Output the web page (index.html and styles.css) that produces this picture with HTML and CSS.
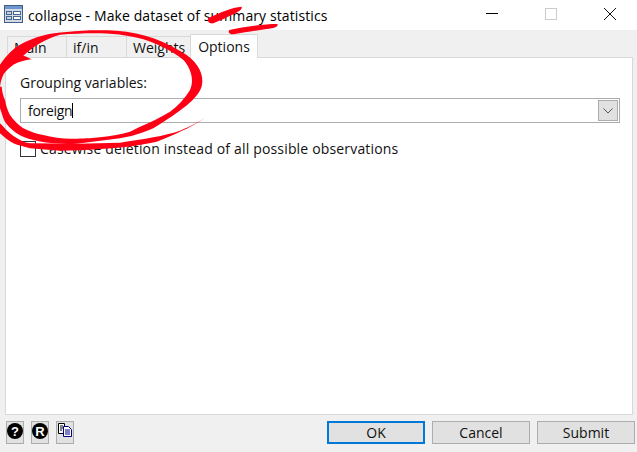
FILE: index.html
```html
<!DOCTYPE html>
<html lang="en">
<head>
    <meta charset="UTF-8">
    <title>collapse - Make dataset of summary statistics</title>
    <link rel="stylesheet" href="styles.css">
</head>
<body>
    <section class="dialog">
        <header class="titlebar">
            <svg class="app-icon" width="19" height="18" viewBox="0 0 19 18">
                <rect x="0.5" y="0.5" width="18" height="17" fill="#d3dae3" stroke="#3f5f8a"/>
                <rect x="1" y="1" width="17" height="3" fill="#6f97cf"/>
                <rect x="2.5" y="6.5" width="5" height="3" fill="#c9d2dd" stroke="#45658f"/>
                <rect x="2.5" y="11.5" width="5" height="3" fill="#c9d2dd" stroke="#45658f"/>
                <rect x="9.5" y="6.5" width="7" height="3" fill="#fff" stroke="#45658f"/>
                <rect x="9.5" y="11.5" width="7" height="3" fill="#fff" stroke="#45658f"/>
            </svg>
            <h1 class="title">collapse - Make dataset of summary statistics</h1>
            <div class="win-controls">
                <svg width="14" height="14" viewBox="0 0 14 14"><path d="M1 6.5H13" stroke="#000"/></svg>
                <svg width="14" height="14" viewBox="0 0 14 14"><rect x="1.5" y="1.5" width="11" height="11" fill="none" stroke="#ccc"/></svg>
                <svg width="14" height="14" viewBox="0 0 14 14"><path d="M1 1L13 13M13 1L1 13" stroke="#111"/></svg>
            </div>
        </header>

        <main class="content">
            <nav class="tabs">
                <span class="tab tab-main">Main</span>
                <span class="tab tab-if">if/in</span>
                <span class="tab tab-weights">Weights</span>
                <span class="tab tab-options active">Options</span>
            </nav>
            <section class="panel">
                <label class="field-label">Grouping variables:</label>
                <div class="combo">
                    <span class="combo-value">foreign</span><span class="caret"></span>
                    <span class="combo-button">
                        <svg width="10" height="6" viewBox="0 0 10 6"><path d="M0.5 0.5L5 5L9.5 0.5" fill="none" stroke="#555"/></svg>
                    </span>
                </div>
                <div class="check-row">
                    <span class="checkbox"></span>
                    <span class="check-label">Casewise deletion instead of all possible observations</span>
                </div>
            </section>
            <footer class="actions">
                <div class="small-buttons">
                    <span class="small-btn"><span class="round-glyph">?</span></span>
                    <span class="small-btn"><span class="round-glyph">R</span></span>
                    <span class="small-btn">
                        <svg width="16" height="14" viewBox="0 0 16 14">
                            <path d="M1.5 0.5H7.5V10.5H1.5Z" fill="#fff" stroke="#000"/>
                            <path d="M3 3H6M3 5H6M3 7H5" stroke="#000"/>
                            <path d="M6.5 3.5H11.5L14.5 6.5V13.5H6.5Z" fill="#fff" stroke="#000080"/>
                            <path d="M8 7H13M8 9H13M8 11H13" stroke="#000080"/>
                        </svg>
                    </span>
                </div>
                <div class="main-buttons">
                    <button class="btn btn-default">OK</button>
                    <button class="btn">Cancel</button>
                    <button class="btn">Submit</button>
                </div>
            </footer>
        </main>
    </section>

    <!-- red marker scribble drawn over the screenshot -->
    <svg class="scribble" width="637" height="452" viewBox="0 0 1911 1356">
        <path fill="#fe0016" d="M0 194 C20 165 40 145 60 134 C100 112 150 98 200 96 C250 90 300 90 350 92 C430 97 500 125 560 165 C595 190 612 225 606 255 C598 295 540 335 460 385 C420 403 390 410 360 415 L230 431 C180 434 130 428 100 420 C80 415 65 410 50 400 C30 385 15 370 10 355 L0 325 L0 260 L5 260 C6 275 10 290 15 300 C18 315 22 330 30 345 C40 360 55 375 70 385 C90 395 110 402 130 405 C160 413 195 418 230 416 C260 416 280 414 300 412 C335 408 365 402 390 395 C400 390 410 385 420 380 C450 368 480 352 510 335 C535 318 555 295 570 270 C585 240 570 200 550 180 C520 155 470 130 430 118 C350 95 270 98 180 104 C140 115 100 138 70 167 C80 170 88 174 95 178 C75 180 55 186 40 194 C25 205 15 215 10 224 C5 235 2 245 0 260 Z"/>
        <path fill="#fe0016" d="M622 348 C590 372 565 385 540 395 C520 405 495 415 470 425 C445 430 425 434 400 438 C370 442 335 445 300 447 C260 450 220 452 180 452 C150 450 120 448 90 445 C70 440 55 436 40 430 C25 422 10 410 0 400 L0 370 C10 380 20 392 30 400 C42 410 55 418 70 425 C80 428 90 430 100 430 L230 431 L360 428 C395 422 430 418 460 412 C490 406 515 400 540 392 C570 380 600 365 622 348 Z"/>
        <path fill="#fe0016" d="M625 54 C660 38 695 22 725 20 C728 28 715 36 695 45 C675 55 660 62 640 70 C628 72 620 64 625 54Z"/>
        <path fill="#fe0016" d="M688 90 C730 80 790 72 832 72 C836 80 825 84 800 87 C765 92 735 97 700 103 C688 103 683 97 688 90Z"/>
    </svg>
</body>
</html>
```

FILE: styles.css
```css
html, body {
    margin: 0;
    height: 100%;
}

body {
    width: 637px;
    height: 452px;
    overflow: hidden;
    position: relative;
    font-family: "Open Sans", sans-serif;
    color: #111;
    background: #f0f0f0;
}

.dialog {
    display: flex;
    flex-direction: column;
    height: 452px;
}

.titlebar {
    display: flex;
    align-items: center;
    height: 30px;
    padding: 0 0 0 4px;
    background: #fff;
}

.app-icon {
    margin: 0 5px 3px 0;
}

.title {
    flex: 1;
    margin: 0;
    font-size: 14px;
    font-weight: 400;
    letter-spacing: 0.1px;
    color: #000;
}

.win-controls {
    display: flex;
    gap: 45px;
    margin: 0 20px 2px 0;
}

.content {
    flex: 1;
    display: flex;
    flex-direction: column;
    padding: 5px 4px 8px 5px;
}

.tabs {
    display: flex;
    align-items: flex-end;
    height: 23px;
    padding-left: 2px;
    margin-bottom: -1px;
    position: relative;
}

.tab {
    display: flex;
    align-items: center;
    box-sizing: border-box;
    height: 22px;
    padding-left: 6px;
    border: 1px solid #d9d9d9;
    border-right: 0;
    font-size: 14px;
}

.tab-main { width: 59px; }
.tab-if { width: 60px; }
.tab-weights { width: 64px; }

.tab-options {
    justify-content: center;
    width: 68px;
    height: 24px;
    padding-left: 0;
    border-right: 1px solid #d9d9d9;
}

.tab.active {
    background: #fff;
    border-bottom: 0;
}

.panel {
    flex: 1;
    display: flex;
    flex-direction: column;
    background: #fff;
    border: 1px solid #d9d9d9;
    padding: 15px 12px 0 14px;
}

.field-label {
    font-size: 14px;
    line-height: 20px;
}

.combo {
    display: flex;
    align-items: center;
    height: 25px;
    box-sizing: border-box;
    margin-top: 5px;
    padding: 0 1px 0 7px;
    border: 1px solid #adadad;
    font-size: 14px;
    letter-spacing: -0.3px;
}

.caret {
    width: 1px;
    height: 15px;
    background: #000;
}

.combo-button {
    display: flex;
    align-items: center;
    justify-content: center;
    box-sizing: border-box;
    width: 20px;
    height: 21px;
    margin-left: auto;
    background: #e1e1e1;
    border: 1px solid #adadad;
}

.check-row {
    display: flex;
    align-items: center;
    margin-top: 17px;
    font-size: 14px;
    line-height: 18px;
}

.checkbox {
    box-sizing: border-box;
    width: 16px;
    height: 16px;
    margin-right: 4px;
    border: 1px solid #333;
}

.check-label {
    letter-spacing: 0.17px;
}

.actions {
    display: flex;
    justify-content: space-between;
    padding-top: 6px;
    margin-right: -2px;
}

.small-buttons,
.main-buttons {
    display: flex;
}

.small-buttons {
    gap: 7px;
    margin-left: 1px;
}

.small-btn {
    display: flex;
    justify-content: center;
    box-sizing: border-box;
    width: 18px;
    height: 23px;
    padding-top: 1px;
    background: #e1e1e1;
    border: 1px solid #adadad;
}

.round-glyph {
    display: flex;
    align-items: center;
    justify-content: center;
    flex: none;
    width: 16px;
    height: 16px;
    border-radius: 50%;
    background: #000;
    color: #fff;
    font-family: "Liberation Sans", sans-serif;
    font-size: 13px;
    font-weight: 700;
}

.main-buttons {
    gap: 7px;
}

.btn {
    box-sizing: border-box;
    width: 98px;
    height: 23px;
    padding: 0;
    background: #e1e1e1;
    border: 1px solid #adadad;
    font-family: inherit;
    font-size: 14px;
    color: #111;
}

.btn-default {
    border: 2px solid #0078d7;
}

.scribble {
    position: absolute;
    top: 0;
    left: 0;
    pointer-events: none;
}
```
